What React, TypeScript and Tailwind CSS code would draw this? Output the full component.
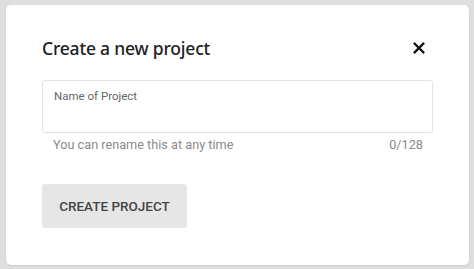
export default function App() {
  return (
    <div className="w-[474px] h-[269px] bg-[#dedede] pt-[5px] pl-[6px]">
      <div className="w-[463px] h-[260px] bg-white rounded-[5px] pt-[30px] px-[36px] shadow-[0_1px_2px_rgba(0,0,0,0.08)]">
        {/* Header */}
        <div className="flex items-center justify-between h-[26px]">
          <h2 className="text-[17.5px] font-medium text-[#222] font-['Noto_Sans',sans-serif] tracking-[-0.2px]">
            Create a new project
          </h2>
          <svg className="w-[12px] h-[12px] mr-[8px]" viewBox="0 0 14 14" fill="none" stroke="#111" strokeWidth="2.7" strokeLinecap="square">
            <path d="M2 2 L12 12 M12 2 L2 12" />
          </svg>
        </div>

        {/* Input */}
        <div className="mt-[19px] w-[391px] h-[53px] border border-[#e3e3e3] rounded-[3px] px-[11px] pt-[8px] font-['Roboto',sans-serif]">
          <span className="block text-[11.5px] text-[#666] leading-[14px]">Name of Project</span>
        </div>
        <div className="flex justify-between pl-[11px] pr-[10px] mt-[4px] font-['Roboto',sans-serif] text-[12.7px] text-[#8a8a8a] leading-[16px]">
          <span>You can rename this at any time</span>
          <span>0/128</span>
        </div>

        {/* Action */}
        <button className="mt-[31px] w-[145px] h-[44px] bg-[#e6e6e6] rounded-[3px] text-[13.5px] font-medium text-[#444] font-['Roboto',sans-serif]">
          CREATE PROJECT
        </button>
      </div>
    </div>
  )
}
